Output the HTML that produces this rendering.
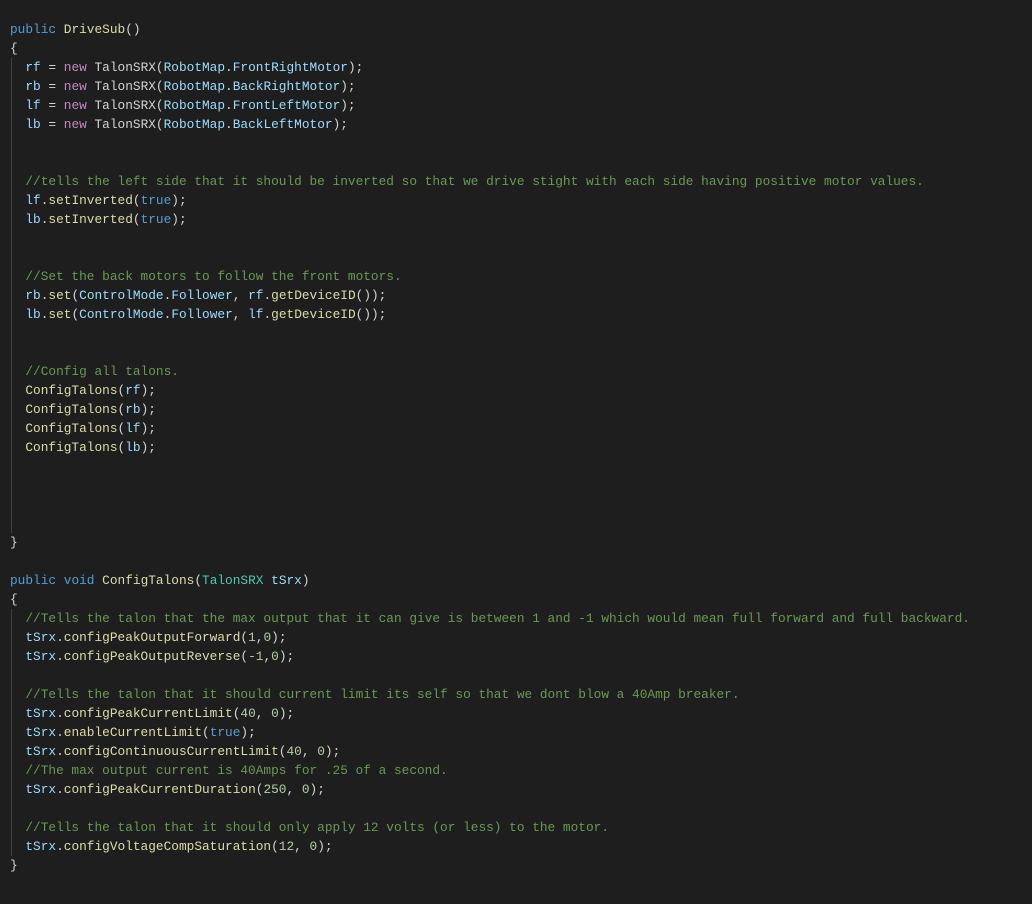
<!DOCTYPE html><html><head><style>
body{margin:0;background:#1e1e1e;width:1032px;height:904px;overflow:hidden;position:relative}
pre{margin:0;position:absolute;left:10px;top:20px;font:12.8px/19px "Liberation Mono",monospace;color:#d4d4d4}
.k{color:#569cd6}.n{color:#c586c0}.f{color:#dcdcaa}.v{color:#9cdcfe}.t{color:#4ec9b0}.c{color:#6a9955}.d{color:#b5cea8}
.g{position:absolute;left:11px;width:1px;background:#404040}
</style></head><body>
<div class="g" style="top:58px;height:475px"></div>
<div class="g" style="top:609px;height:247px"></div>
<pre><span class="k">public</span> <span class="f">DriveSub</span>()
{
  <span class="v">rf</span> = <span class="n">new</span> TalonSRX(<span class="v">RobotMap</span>.<span class="v">FrontRightMotor</span>);
  <span class="v">rb</span> = <span class="n">new</span> TalonSRX(<span class="v">RobotMap</span>.<span class="v">BackRightMotor</span>);
  <span class="v">lf</span> = <span class="n">new</span> TalonSRX(<span class="v">RobotMap</span>.<span class="v">FrontLeftMotor</span>);
  <span class="v">lb</span> = <span class="n">new</span> TalonSRX(<span class="v">RobotMap</span>.<span class="v">BackLeftMotor</span>);


  <span class="c">//tells the left side that it should be inverted so that we drive stight with each side having positive motor values.</span>
  <span class="v">lf</span>.<span class="f">setInverted</span>(<span class="k">true</span>);
  <span class="v">lb</span>.<span class="f">setInverted</span>(<span class="k">true</span>);


  <span class="c">//Set the back motors to follow the front motors.</span>
  <span class="v">rb</span>.<span class="f">set</span>(<span class="v">ControlMode</span>.<span class="v">Follower</span>, <span class="v">rf</span>.<span class="f">getDeviceID</span>());
  <span class="v">lb</span>.<span class="f">set</span>(<span class="v">ControlMode</span>.<span class="v">Follower</span>, <span class="v">lf</span>.<span class="f">getDeviceID</span>());


  <span class="c">//Config all talons.</span>
  <span class="f">ConfigTalons</span>(<span class="v">rf</span>);
  <span class="f">ConfigTalons</span>(<span class="v">rb</span>);
  <span class="f">ConfigTalons</span>(<span class="v">lf</span>);
  <span class="f">ConfigTalons</span>(<span class="v">lb</span>);




}

<span class="k">public</span> <span class="k">void</span> <span class="f">ConfigTalons</span>(<span class="t">TalonSRX</span> <span class="v">tSrx</span>)
{
  <span class="c">//Tells the talon that the max output that it can give is between 1 and -1 which would mean full forward and full backward.</span>
  <span class="v">tSrx</span>.<span class="f">configPeakOutputForward</span>(<span class="d">1</span>,<span class="d">0</span>);
  <span class="v">tSrx</span>.<span class="f">configPeakOutputReverse</span>(<span class="d">-1</span>,<span class="d">0</span>);

  <span class="c">//Tells the talon that it should current limit its self so that we dont blow a 40Amp breaker.</span>
  <span class="v">tSrx</span>.<span class="f">configPeakCurrentLimit</span>(<span class="d">40</span>, <span class="d">0</span>);
  <span class="v">tSrx</span>.<span class="f">enableCurrentLimit</span>(<span class="k">true</span>);
  <span class="v">tSrx</span>.<span class="f">configContinuousCurrentLimit</span>(<span class="d">40</span>, <span class="d">0</span>);
  <span class="c">//The max output current is 40Amps for .25 of a second.</span>
  <span class="v">tSrx</span>.<span class="f">configPeakCurrentDuration</span>(<span class="d">250</span>, <span class="d">0</span>);

  <span class="c">//Tells the talon that it should only apply 12 volts (or less) to the motor.</span>
  <span class="v">tSrx</span>.<span class="f">configVoltageCompSaturation</span>(<span class="d">12</span>, <span class="d">0</span>);
}</pre>
</body></html>
